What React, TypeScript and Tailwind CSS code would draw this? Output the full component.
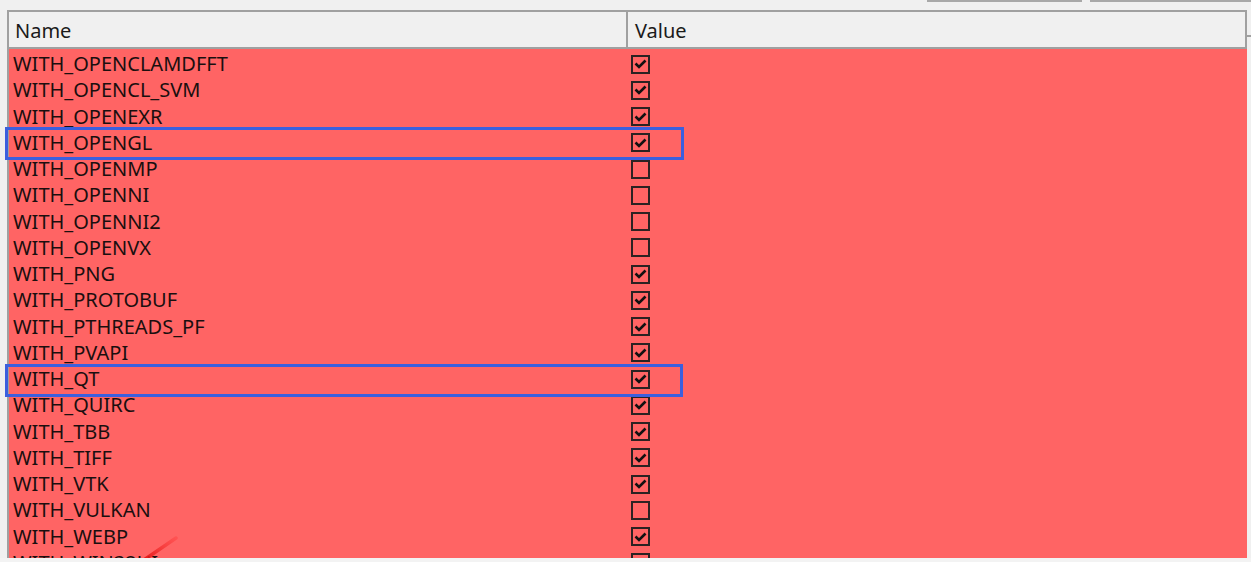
import React from 'react'

interface Option {
  name: string
  on: boolean
}

const options: Option[] = [
  { name: 'WITH_OPENCLAMDFFT', on: true },
  { name: 'WITH_OPENCL_SVM', on: true },
  { name: 'WITH_OPENEXR', on: true },
  { name: 'WITH_OPENGL', on: true },
  { name: 'WITH_OPENMP', on: false },
  { name: 'WITH_OPENNI', on: false },
  { name: 'WITH_OPENNI2', on: false },
  { name: 'WITH_OPENVX', on: false },
  { name: 'WITH_PNG', on: true },
  { name: 'WITH_PROTOBUF', on: true },
  { name: 'WITH_PTHREADS_PF', on: true },
  { name: 'WITH_PVAPI', on: true },
  { name: 'WITH_QT', on: true },
  { name: 'WITH_QUIRC', on: true },
  { name: 'WITH_TBB', on: true },
  { name: 'WITH_TIFF', on: true },
  { name: 'WITH_VTK', on: true },
  { name: 'WITH_VULKAN', on: false },
  { name: 'WITH_WEBP', on: true },
  { name: 'WITH_WIN32UI', on: true },
]

const CheckBox = ({ on }: { on: boolean }) => (
  <div className="w-[19px] h-[19px] border-2 border-[#2b2222] flex items-center justify-center">
    {on && (
      <svg width="13" height="10" viewBox="0 0 13 10">
        <path d="M1.5 4.5 L5 8 L11.5 1.5" fill="none" stroke="#111" strokeWidth="2.6" />
      </svg>
    )}
  </div>
)

export default function App() {
  return (
    <div
      className="w-[1251px] h-[562px] bg-[#f0f0f0] overflow-hidden relative"
      style={{ fontFamily: '"Noto Sans", "Open Sans", sans-serif' }}
    >
      {/* bottoms of toolbar buttons above the table */}
      <div className="h-[10px] flex justify-end gap-[8px]">
        <div className="w-[155px] h-[2px] border-b-2 border-x border-[#a8a8a8] bg-[#e6e6e6]" />
        <div className="w-[161px] h-[2px] border-b-2 border-l border-[#a8a8a8] bg-[#e6e6e6]" />
      </div>

      <div className="flex">
        <div className="ml-[7px] w-[1240px] h-[548px] border-2 border-b-0 border-r-0 border-[#a0a0a0] bg-[#ff6464] overflow-hidden">
          <div className="h-[37px] flex bg-[#f0f0f0] border-b-2 border-[#a0a0a0] text-[20px] text-[#1a1a1a]">
            <div className="w-[619px] border-r-2 border-[#a0a0a0] pl-[6px] pt-[3px] flex items-center">Name</div>
            <div className="flex-1 border-r-2 border-[#a0a0a0] pl-[7px] pt-[3px] flex items-center">Value</div>
          </div>
          <div className="pt-[2px]">
            {options.map((o) => (
              <div key={o.name} className="h-[26.25px] flex items-center text-[20px] text-[#1a0f0f]">
                <div className="w-[622px] pl-[4px] leading-none">{o.name}</div>
                <CheckBox on={o.on} />
              </div>
            ))}
          </div>
        </div>
        <div className="flex-1 mt-[25px] h-[2px] bg-[#a0a0a0]" />
      </div>

      {/* annotation boxes */}
      <div className="absolute left-[5px] top-[127px] w-[679px] h-[33px] border-[3px] border-[#3b5fde]" />
      <div className="absolute left-[5px] top-[364px] w-[678px] h-[33px] border-[3px] border-[#3b5fde]" />

      {/* annotation arrow stroke */}
      <svg className="absolute left-[135px] top-[535px]" width="45" height="27" viewBox="0 0 45 27">
        <defs>
          <linearGradient id="g" x1="1" y1="0" x2="0" y2="1">
            <stop offset="0" stopColor="#ff4040" stopOpacity="0.5" />
            <stop offset="1" stopColor="#e01010" />
          </linearGradient>
        </defs>
        <path d="M41 3 L6 27" stroke="url(#g)" strokeWidth="3.5" strokeLinecap="round" />
      </svg>

      <div className="absolute left-0 top-[558px] w-full h-[4px] bg-[#f3f3f3]" />
    </div>
  )
}
